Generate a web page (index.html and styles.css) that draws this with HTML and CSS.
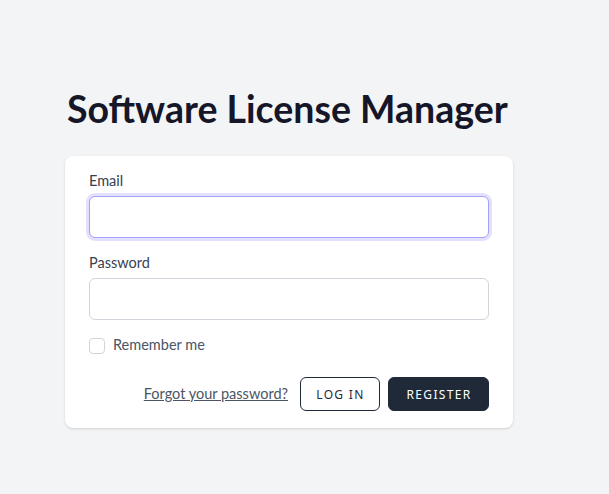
FILE: index.html
```html
<!DOCTYPE html>
<html lang="en">
<head>
<meta charset="utf-8">
<title>Software License Manager</title>
<link rel="stylesheet" href="styles.css">
</head>
<body>
<div class="page">
  <h1 class="title">Software License Manager</h1>
  <form class="card">
    <div class="field">
      <label class="label" for="email">Email</label>
      <input class="input input-focus" id="email" type="email">
    </div>
    <div class="field field-gap">
      <label class="label" for="password">Password</label>
      <input class="input" id="password" type="password">
    </div>
    <label class="remember">
      <span class="checkbox"></span>
      <span class="remember-text">Remember me</span>
    </label>
    <div class="actions">
      <a class="forgot" href="#">Forgot your password?</a>
      <button class="btn btn-outline" type="button">Log in</button>
      <button class="btn btn-dark" type="button">Register</button>
    </div>
  </form>
</div>
</body>
</html>
```
FILE: styles.css
```css
* { box-sizing: border-box; }
html, body { margin: 0; padding: 0; }
body {
  background: #f3f4f6;
  font-family: "Lato", "Noto Sans", sans-serif;
  color: #111827;
  width: 609px;
  height: 494px;
  overflow: hidden;
}
.page {
  width: 448px;
  margin-left: 65px;
  padding-top: 87px;
}
.title {
  margin: 0 0 0 2px;
  font-size: 37.5px;
  line-height: 44px;
  font-weight: 700;
  color: #161629;
  white-space: nowrap;
}
.card {
  margin-top: 25px;
  background: #fff;
  border-radius: 8px;
  padding: 16px 24px 17px;
  box-shadow: 0 1px 3px rgba(0,0,0,0.10), 0 1px 2px rgba(0,0,0,0.06);
}
.field { display: flex; flex-direction: column; }
.field-gap { margin-top: 16px; }
.label {
  font-size: 14.5px;
  line-height: 20px;
  color: #374151;
  position: relative;
  top: -1px;
}
.input {
  margin-top: 4px;
  height: 42px;
  width: 100%;
  border: 1px solid #d1d5db;
  border-radius: 6px;
  background: #fff;
  outline: none;
}
.input-focus {
  border-color: #a5a1f7;
  box-shadow: 0 0 0 3px #e3e0fd;
}
.remember {
  margin-top: 16px;
  display: flex;
  align-items: center;
  height: 20px;
}
.checkbox {
  width: 16px;
  height: 16px;
  border: 1px solid #d1d5db;
  border-radius: 4px;
  background: #fff;
}
.remember-text {
  margin-left: 8px;
  font-size: 14.5px;
  line-height: 20px;
  color: #4b5563;
  position: relative;
  top: -1px;
}
.actions {
  margin-top: 21px;
  display: flex;
  justify-content: flex-end;
  align-items: center;
}
.forgot {
  font-size: 14.5px;
  color: #4b5563;
  text-decoration: underline;
  margin-right: 12px;
  position: relative;
  top: -1px;
}
.btn {
  height: 34px;
  border-radius: 6px;
  font-family: "Noto Sans", sans-serif;
  font-size: 12px;
  font-weight: 400;
  letter-spacing: 0.11em;
  text-transform: uppercase;
  display: flex;
  align-items: center;
  justify-content: center;
  padding: 0 0 0 1px;
}
.btn-outline {
  width: 80px;
  background: #fff;
  color: #1f2937;
  border: 1px solid #1f2937;
}
.btn-dark {
  width: 101px;
  margin-left: 8px;
  background: #1f2937;
  color: #fff;
  border: 1px solid #1f2937;
}
```
